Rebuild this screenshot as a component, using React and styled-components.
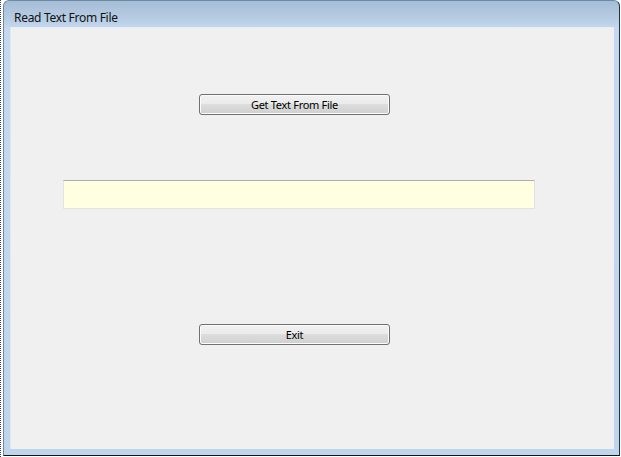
import React from 'react'
import styled, {createGlobalStyle} from 'styled-components'

const GlobalStyle = createGlobalStyle`
  html, body {
    margin: 0;
    padding: 0;
    background: #ffffff;
  }
  body {
    font-family: "Noto Sans", "Liberation Sans", sans-serif;
  }
`

const Stage = styled.div`
  display: flex;
  width: 621px;
  height: 457px;
  border-left: 1px dotted #404040;
  box-sizing: border-box;
  padding-left: 2px;
`

const Window = styled.div`
  display: flex;
  flex-direction: column;
  width: 617px;
  height: 456px;
  box-sizing: border-box;
  border-radius: 6px 6px 0 0;
  border: 1px solid #6c8aa8;
  border-right-color: #1d3348;
  border-bottom: 1px solid #0b1620;
  background: linear-gradient(180deg, #a6bdd6 0px, #b9cfe6 20px, #c4d9ef 27px, #bfd5ec 100%);
  padding: 0 5px 6px 6px;
`

const TitleBar = styled.div`
  height: 26px;
  display: flex;
  align-items: center;
  padding-left: 4px;
  padding-top: 6px;
  box-sizing: border-box;
  font-size: 12px;
  color: #111;
  letter-spacing: -0.3px;
`

const Client = styled.div`
  flex: 1;
  background: #f0f0f0;
  display: flex;
  flex-direction: column;
  border-top: 1px solid #e6edf5;
  border-left: 1px solid #dfe8f1;
`

const Button = styled.button`
  width: 191px;
  height: 21px;
  margin-left: 188px;
  margin-top: ${(p) => p.$top}px;
  padding: 0;
  border: 1px solid #707070;
  border-radius: 3px;
  background: linear-gradient(180deg, #f2f2f2 0%, #ebebeb 45%, #dddddd 50%, #cfcfcf 100%);
  box-shadow: inset 0 0 0 1px #fcfcfc;
  font-family: "Noto Sans", "Liberation Sans", sans-serif;
  font-size: 11px;
  letter-spacing: -0.3px;
  color: #000;
  line-height: 18px;
`

const TextBox = styled.div`
  width: 472px;
  height: 29px;
  margin-left: 52px;
  margin-top: 65px;
  box-sizing: border-box;
  background: #ffffe1;
  border: 1px solid #e2e3ea;
  border-top-color: #abadb3;
`

export default function App() {
  return (
    <>
      <GlobalStyle />
      <Stage>
        <Window>
          <TitleBar>Read Text From File</TitleBar>
          <Client>
            <Button $top={66}>Get Text From File</Button>
            <TextBox />
            <Button $top={115}>Exit</Button>
          </Client>
        </Window>
      </Stage>
    </>
  )
}
